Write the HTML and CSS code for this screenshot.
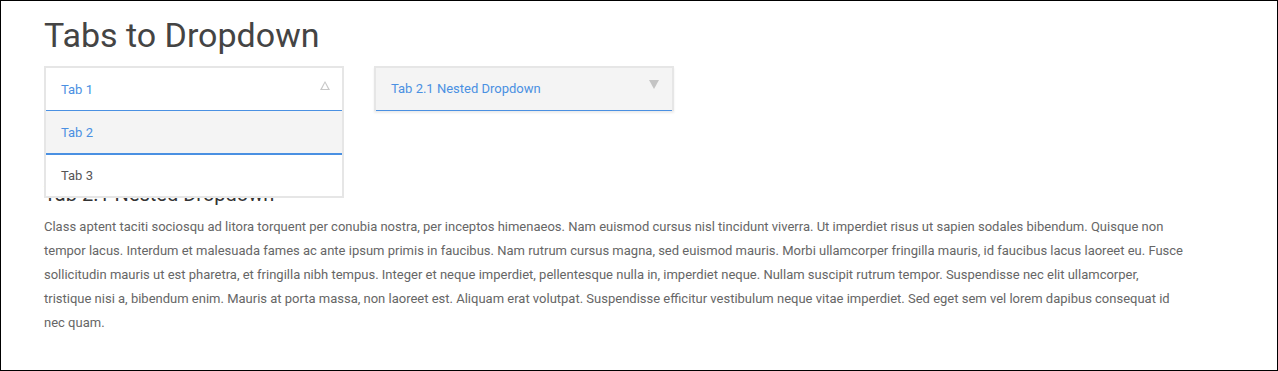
FILE: index.html
```html
<!DOCTYPE html>
<html>
<head>
<meta charset="utf-8">
<link rel="stylesheet" href="styles.css">
</head>
<body>
<div class="page">
  <h1 class="title">Tabs to Dropdown</h1>
  <div class="tabs-row">
    <div class="dropdown">
      <div class="dd-box open">
        <div class="dd-item current">Tab 1<span class="arrow-up"></span></div>
        <div class="dd-item active">Tab 2</div>
        <div class="dd-item last">Tab 3</div>
      </div>
    </div>
    <div class="dropdown nested">
      <div class="dd-box">
        <div class="dd-item current shaded">Tab 2.1 Nested Dropdown<span class="arrow-down"></span></div>
      </div>
    </div>
  </div>
  <h2 class="sub">Tab 2.1 Nested Dropdown</h2>
  <p class="text">Class aptent taciti sociosqu ad litora torquent per conubia nostra, per inceptos himenaeos. Nam euismod cursus nisl tincidunt viverra. Ut imperdiet risus ut sapien sodales bibendum. Quisque non tempor lacus. Interdum et malesuada fames ac ante ipsum primis in faucibus. Nam rutrum cursus magna, sed euismod mauris. Morbi ullamcorper fringilla mauris, id faucibus lacus laoreet eu. Fusce sollicitudin mauris ut est pharetra, et fringilla nibh tempus. Integer et neque imperdiet, pellentesque nulla in, imperdiet neque. Nullam suscipit rutrum tempor. Suspendisse nec elit ullamcorper, tristique nisi a, bibendum enim. Mauris at porta massa, non laoreet est. Aliquam erat volutpat. Suspendisse efficitur vestibulum neque vitae imperdiet. Sed eget sem vel lorem dapibus consequat id nec quam.</p>
</div>
</body>
</html>
```
FILE: styles.css
```css
html, body {
  margin: 0;
  padding: 0;
}
body {
  width: 1278px;
  height: 371px;
  box-sizing: border-box;
  border: 1px solid #000;
  background: #fff;
  font-family: Roboto, "Liberation Sans", sans-serif;
  overflow: hidden;
}
.page {
  padding: 14px 0 0 43px;
  width: 1142px;
}
.title {
  margin: 0;
  font-size: 34px;
  font-weight: 400;
  line-height: 40px;
  color: #444;
}
.tabs-row {
  display: flex;
  gap: 30px;
  margin-top: 11px;
  height: 46px;
}
.dropdown {
  position: relative;
  width: 300px;
  height: 46px;
}
.dd-box {
  position: absolute;
  top: 0;
  left: 0;
  width: 300px;
  box-sizing: border-box;
  border: 2px solid #e6e6e6;
  border-bottom: none;
  background: #fff;
  z-index: 2;
}
.dd-box.open {
  border-bottom: 2px solid #e6e6e6;
}
.dropdown.nested .dd-box {
  box-shadow: 0 2px 2px rgba(0, 0, 0, 0.08);
}
.dd-item {
  position: relative;
  height: 43px;
  line-height: 43px;
  padding-left: 15px;
  font-size: 13px;
  color: #555;
  box-sizing: border-box;
}
.dd-item.last {
  height: 41px;
  line-height: 41px;
}
.dd-item.current {
  color: #4a90e2;
  border-bottom: 1px solid #4a90e2;
  height: 43px;
}
.dd-item.active {
  color: #4a90e2;
  background: #f4f4f4;
  border-bottom: 2px solid #4a90e2;
  height: 44px;
  line-height: 44px;
}
.dd-item.shaded {
  background: #f4f4f4;
  height: 43px;
  line-height: 42px;
}
.arrow-up {
  position: absolute;
  right: 12px;
  top: 13px;
  width: 0;
  height: 0;
  border-left: 5px solid transparent;
  border-right: 5px solid transparent;
  border-bottom: 9px solid #c8c8c8;
}
.arrow-up::after {
  content: "";
  position: absolute;
  left: -3.5px;
  top: 2px;
  border-left: 3.5px solid transparent;
  border-right: 3.5px solid transparent;
  border-bottom: 6px solid #fff;
}
.arrow-down {
  position: absolute;
  right: 13px;
  top: 12px;
  width: 0;
  height: 0;
  border-left: 5px solid transparent;
  border-right: 5px solid transparent;
  border-top: 9px solid #c4c4c4;
}
.sub {
  margin: 70px 0 0;
  font-size: 20px;
  font-weight: 400;
  line-height: 24px;
  color: #333;
}
.text {
  margin: 9px 0 0;
  font-size: 13px;
  line-height: 24px;
  color: #666;
}
```
